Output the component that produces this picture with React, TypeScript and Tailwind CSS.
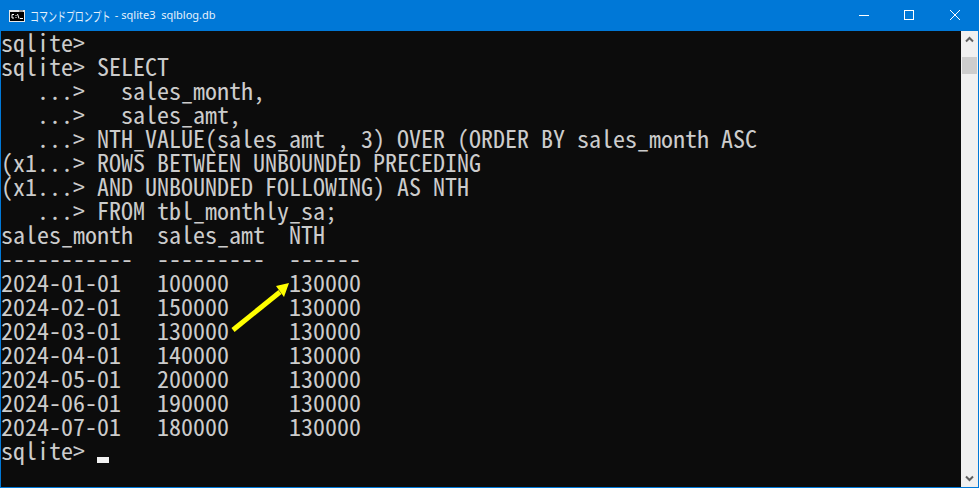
const LINES = [
  'sqlite>',
  'sqlite> SELECT',
  '   ...>   sales_month,',
  '   ...>   sales_amt,',
  '   ...> NTH_VALUE(sales_amt , 3) OVER (ORDER BY sales_month ASC',
  '(x1...> ROWS BETWEEN UNBOUNDED PRECEDING',
  '(x1...> AND UNBOUNDED FOLLOWING) AS NTH',
  '   ...> FROM tbl_monthly_sa;',
  'sales_month  sales_amt  NTH',
  '-----------  ---------  ------',
  '2024-01-01   100000     130000',
  '2024-02-01   150000     130000',
  '2024-03-01   130000     130000',
  '2024-04-01   140000     130000',
  '2024-05-01   200000     130000',
  '2024-06-01   190000     130000',
  '2024-07-01   180000     130000',
];

function ConsoleIcon() {
  return (
    <svg width="16" height="12" viewBox="0 0 16 12" className="shrink-0">
      <rect x="0" y="0" width="16" height="12" fill="#e8e8e8" />
      <rect x="10" y="0.5" width="4" height="1" fill="#555" />
      <rect x="1" y="2" width="14" height="9" fill="#000" />
      <path d="M5 4.5H3v3.5h2M7 5v1M7 7v1M8.5 4l1.5 4.5M11 8.5h3" stroke="#fff" strokeWidth="1" fill="none" />
    </svg>
  );
}

export default function App() {
  return (
    <div className="w-[979px] h-[488px] flex flex-col bg-[#0078d7] overflow-hidden">
      <div className="h-[31px] shrink-0 flex items-center pl-[9px] gap-[5px] text-white">
        <ConsoleIcon />
        <div className="flex items-center text-[11px] text-[#e6f1fb] font-['Noto_Sans',sans-serif] whitespace-pre">
          <span className="inline-block w-[82px] text-[13px] scale-x-[0.69] origin-left font-['Noto_Sans_CJK_JP',sans-serif]">コマンドプロンプト</span>
          <span> - sqlite3  sqlblog.db</span>
        </div>
        <div className="ml-auto mb-px mr-px flex items-center">
          <div className="w-[44px] flex justify-center">
            <svg width="10" height="10" viewBox="0 0 10 10"><path d="M0 5.5h10" stroke="#fff" /></svg>
          </div>
          <div className="w-[46px] flex justify-center">
            <svg width="10" height="10" viewBox="0 0 10 10"><rect x="0.5" y="0.5" width="9" height="9" stroke="#fff" fill="none" /></svg>
          </div>
          <div className="w-[46px] flex justify-center">
            <svg width="10" height="10" viewBox="0 0 10 10"><path d="M0 0l10 10M10 0L0 10" stroke="#fff" /></svg>
          </div>
        </div>
      </div>
      <div className="flex-1 flex min-h-0 pl-px pr-px pb-px">
        <div className="relative flex-1 bg-[#0c0c0c] text-[#cccccc] font-['Noto_Sans_Mono_CJK_JP','Liberation_Mono',monospace] text-[24px] leading-[20px] pt-px overflow-hidden">
          {LINES.map((line, i) => (
            <div key={i} className="whitespace-pre h-[24px]">{line}</div>
          ))}
          <div className="flex h-[24px]">
            <span className="whitespace-pre">sqlite&gt; </span>
            <span className="w-[12px] h-[6px] bg-[#f2f2f2] mt-[17px]" />
          </div>
          <svg width="70" height="60" viewBox="0 0 70 60" className="absolute left-[224px] top-[244px]">
            <path d="M8 55L55 17" stroke="#ffff00" strokeWidth="5" fill="none" />
            <path d="M64 8L51 11L59 22Z" fill="#ffff00" />
          </svg>
        </div>
        <div className="w-[17px] bg-[#f0f0f0] flex flex-col items-center shrink-0">
          <div className="h-[17px] flex items-center justify-center">
            <svg width="9" height="7" viewBox="0 0 9 7"><path d="M1 5.5l3.5-3.5L8 5.5" stroke="#606060" strokeWidth="2" fill="none" /></svg>
          </div>
          <div className="w-[15px] h-[17px] mt-[9px] bg-[#cdcdcd]" />
          <div className="mt-auto h-[17px] flex items-center justify-center">
            <svg width="9" height="7" viewBox="0 0 9 7"><path d="M1 1.5l3.5 3.5L8 1.5" stroke="#606060" strokeWidth="2" fill="none" /></svg>
          </div>
        </div>
      </div>
    </div>
  );
}
